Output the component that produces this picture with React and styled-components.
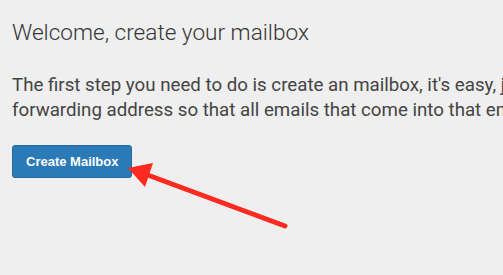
import React from "react";
import styled, { createGlobalStyle } from "styled-components";

const GlobalStyle = createGlobalStyle`
  html, body {
    margin: 0;
    padding: 0;
    background: #efefef;
    overflow: hidden;
  }
  body {
    font-family: Roboto, "Liberation Sans", Arial, sans-serif;
  }
`;

const Page = styled.div`
  position: relative;
  width: 503px;
  height: 275px;
  padding: 0 12px;
  box-sizing: border-box;
  overflow: hidden;
`;

const Title = styled.h1`
  margin: 0;
  padding-top: 19px;
  font-size: 22.6px;
  line-height: 28px;
  font-weight: 300;
  color: #363636;
`;

const Intro = styled.p`
  margin: 26px 0 0;
  font-size: 18.7px;
  line-height: 25px;
  font-weight: 400;
  color: #444;
  white-space: nowrap;
`;

const Button = styled.button`
  display: block;
  margin-top: 22px;
  height: 33px;
  padding: 0 13px;
  border: 1px solid #2468a0;
  border-radius: 3px;
  background: #2a7ab8;
  color: #fff;
  font-family: "Liberation Sans", Arial, sans-serif;
  font-size: 13px;
  font-weight: 700;
  cursor: pointer;
`;

// red annotation arrow lying over the page
const Arrow = styled.svg`
  position: absolute;
  left: 0;
  top: 0;
  pointer-events: none;
`;

export default function App() {
  return (
    <>
      <GlobalStyle />
      <Page>
        <Title>Welcome, create your mailbox</Title>
        <Intro>
          The first step you need to do is create an mailbox, it's easy, just choose a name and a
          <br />
          forwarding address so that all emails that come into that email get forwarded to you.
        </Intro>
        <Button>Create Mailbox</Button>
        <Arrow width="503" height="275" viewBox="0 0 503 275">
          <line x1="285" y1="226" x2="145" y2="174" stroke="#ff2a1f" strokeWidth="5" strokeLinecap="round" />
          <polygon points="128,168 153,163 145,187" fill="#ff2a1f" />
        </Arrow>
      </Page>
    </>
  );
}
